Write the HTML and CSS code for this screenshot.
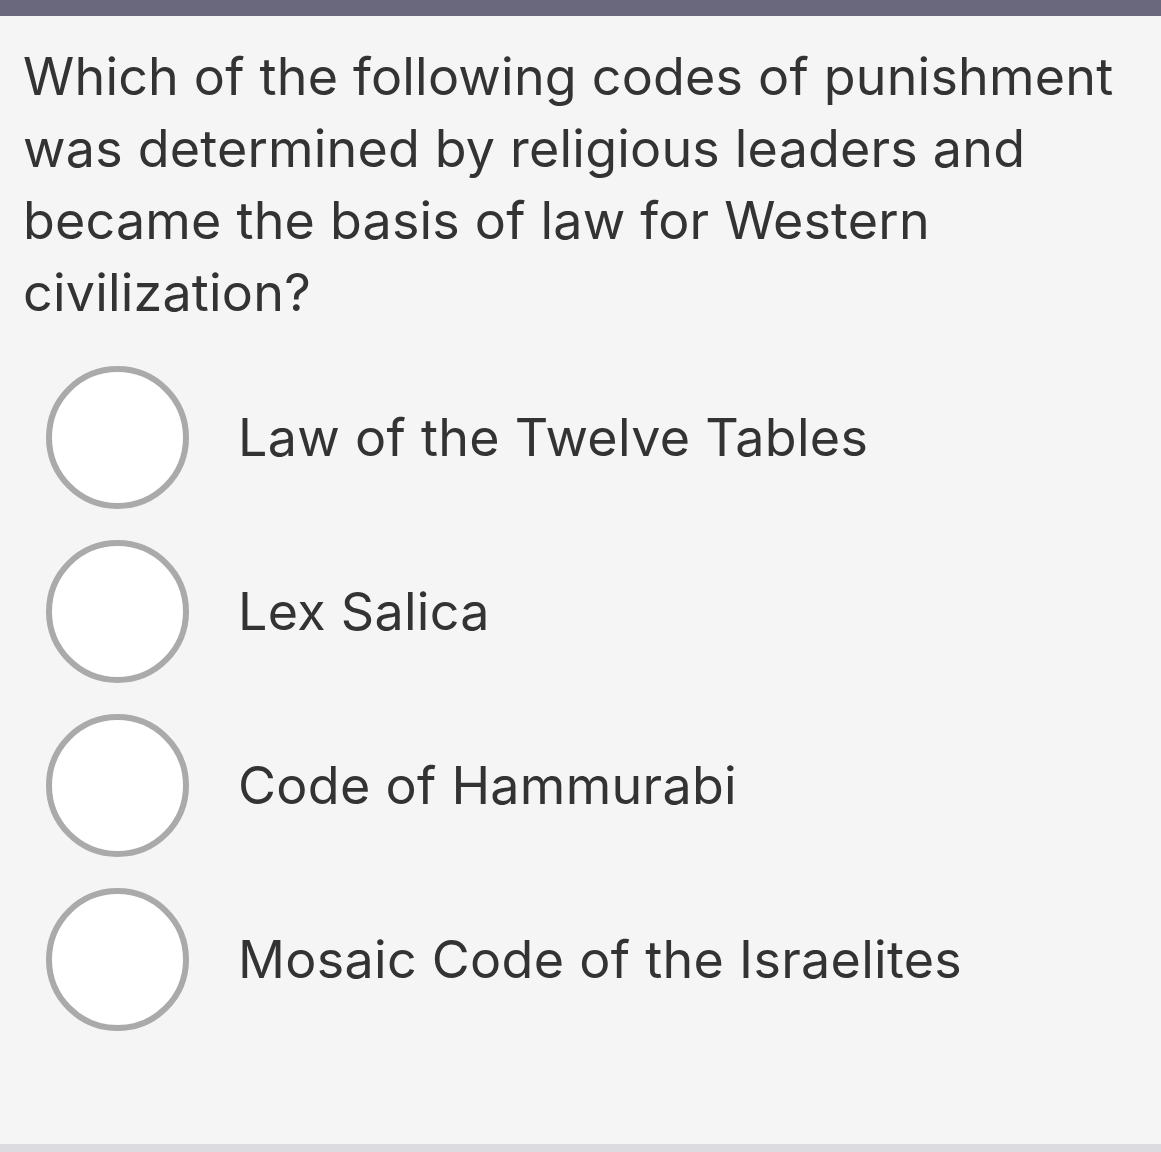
FILE: index.html
```html
<!DOCTYPE html>
<html lang="en">
<head>
<meta charset="utf-8">
<title>Question</title>
<link rel="stylesheet" href="styles.css">
</head>
<body>
<div class="topbar"></div>
<main class="quiz">
  <p class="question">Which of the following codes of punishment was determined by religious leaders and became the basis of law for Western civilization?</p>
  <ul class="options">
    <li class="option"><span class="radio"></span><span class="label">Law of the Twelve Tables</span></li>
    <li class="option"><span class="radio"></span><span class="label">Lex Salica</span></li>
    <li class="option"><span class="radio"></span><span class="label">Code of Hammurabi</span></li>
    <li class="option"><span class="radio"></span><span class="label">Mosaic Code of the Israelites</span></li>
  </ul>
</main>
<div class="bottombar"></div>
</body>
</html>
```
FILE: styles.css
```css
html, body {
  margin: 0;
  padding: 0;
}
body {
  background: #f5f5f5;
  font-family: Inter, "Noto Sans", sans-serif;
  color: #333333;
  width: 1161px;
  height: 1152px;
  display: flex;
  flex-direction: column;
  overflow: hidden;
}
.topbar {
  height: 16px;
  background: #6a687c;
  flex: none;
}
.quiz {
  flex: 1;
  padding: 25px 20px 0 23px;
}
.question {
  margin: 0;
  font-size: 52px;
  line-height: 72px;
  letter-spacing: 0.2px;
}
.options {
  list-style: none;
  margin: 37px 0 0 0;
  padding: 0 0 0 23px;
  display: flex;
  flex-direction: column;
  gap: 31px;
}
.option {
  display: flex;
  align-items: center;
  gap: 49px;
}
.radio {
  width: 131px;
  height: 131px;
  border: 6px solid #aaaaaa;
  border-radius: 50%;
  background: #ffffff;
  flex: none;
}
.label {
  font-size: 52px;
  letter-spacing: 0.3px;
}
.bottombar {
  height: 8px;
  background: #dcdbdf;
  flex: none;
}
```
